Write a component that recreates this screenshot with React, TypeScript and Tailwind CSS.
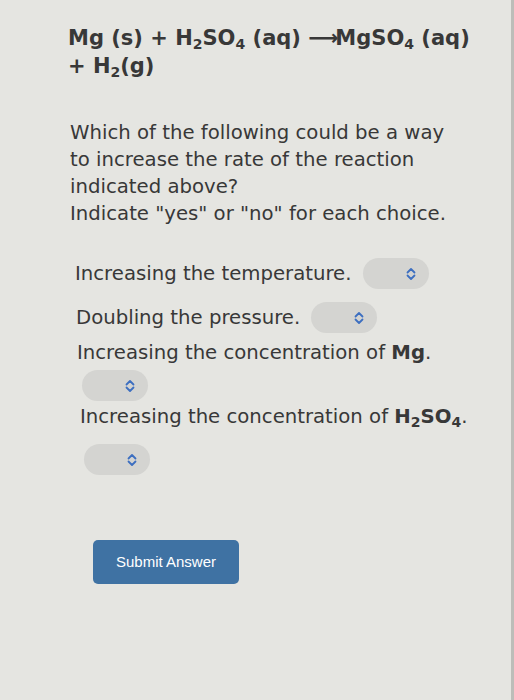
import React from 'react'

function Chevrons() {
  return (
    <svg width="12" height="14" viewBox="0 0 12 14" fill="none" stroke="#3d6fc0" strokeWidth="1.8" strokeLinecap="round" strokeLinejoin="round">
      <path d="M2.5 5.5 L6 2 L9.5 5.5" />
      <path d="M2.5 8.5 L6 12 L9.5 8.5" />
    </svg>
  )
}

function Select({ className = '' }: { className?: string }) {
  return (
    <div className={`inline-flex w-[66px] h-[31px] rounded-full bg-[#d4d4d1] items-center justify-end pr-[12px] ${className}`}>
      <Chevrons />
    </div>
  )
}

export default function App() {
  return (
    <div className="w-[514px] h-[700px] bg-[#e5e5e1] text-[#383838] border-r-[3px] border-[#bdbdb9] overflow-hidden" style={{ fontFamily: '"DejaVu Sans", Verdana, sans-serif' }}>
      <div className="pt-[24px] pl-[68px]">
        <p className="font-bold text-[21px] leading-[28px] whitespace-nowrap">
          Mg (s) + H<sub className="text-[14px]">2</sub>SO<sub className="text-[14px]">4</sub> (aq) <span className="tracking-[-3px]">⟶</span>MgSO<sub className="text-[14px]">4</sub> (aq)
          <br />+ H<sub className="text-[14px]">2</sub>(g)
        </p>

        <p className="mt-[39px] ml-[2px] text-[19.7px] leading-[27px]">
          Which of the following could be a way
          <br />to increase the rate of the reaction
          <br />indicated above?
          <br />Indicate "yes" or "no" for each choice.
        </p>

        <div className="mt-[31px] ml-[7px] flex items-center gap-[12px] text-[19.7px]">
          <span>Increasing the temperature.</span>
          <Select />
        </div>

        <div className="mt-[13px] ml-[8px] flex items-center gap-[11px] text-[19.7px]">
          <span>Doubling the pressure.</span>
          <Select />
        </div>

        <p className="mt-[6px] ml-[9px] text-[19.7px] leading-[27px]">
          Increasing the concentration of <b>Mg</b>.
        </p>
        <Select className="mt-[4px] ml-[14px]" />

        <p className="mt-[2px] ml-[12px] text-[19.7px] leading-[27px]">
          Increasing the concentration of <b>H<sub className="text-[14px]">2</sub>SO<sub className="text-[14px]">4</sub></b>.
        </p>
        <Select className="mt-[14px] ml-[16px]" />

        <button className="block mt-[65px] ml-[25px] w-[146px] h-[44px] rounded-[5px] bg-[#3f72a3] text-white text-[15px]" style={{ fontFamily: '"Liberation Sans", Arial, sans-serif' }}>
          Submit Answer
        </button>
      </div>
    </div>
  )
}
